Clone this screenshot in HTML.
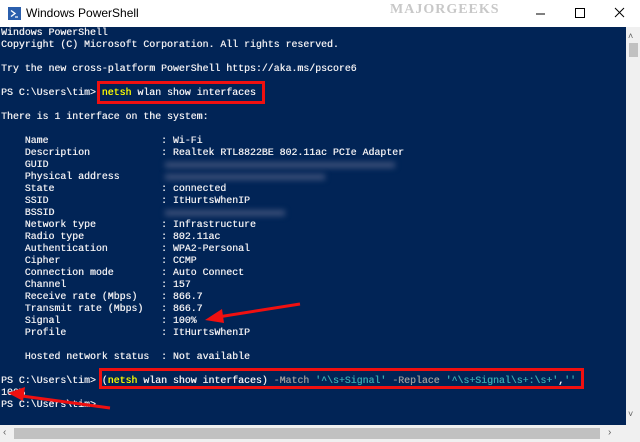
<!DOCTYPE html>
<html><head><meta charset="utf-8"><style>
*{margin:0;padding:0;box-sizing:border-box}
body{width:640px;height:442px;overflow:hidden;background:#fff;position:relative;font-family:"Liberation Sans",sans-serif}
#title{position:absolute;left:0;top:0;width:640px;height:27px;background:#fff}
#title .t{position:absolute;left:26px;top:6px;font-size:12px;color:#000}
#con{position:absolute;left:0;top:27px;width:626px;height:398px;background:#012456;overflow:hidden}
pre{position:absolute;left:1px;top:0px;font-family:"Liberation Mono",monospace;font-size:9.9px;line-height:12px;color:#eeedf0;white-space:pre;text-shadow:0.3px 0 0 currentColor}
.y{color:#ffff00}.g{color:#9a9a9a}.c{color:#35a8b0}
.blur{position:absolute;background:#3b4f78;filter:blur(3px);height:6px}
.box{position:absolute;border:3px solid #f01010}
#vs{position:absolute;left:626px;top:27px;width:14px;height:398px;background:#f0f0f0}
#hs{position:absolute;left:0;top:425px;width:640px;height:17px;background:#f0f0f0}
</style></head><body>
<div id="title">
<svg style="position:absolute;left:8px;top:7px" width="13" height="13" viewBox="0 0 13 13"><rect width="13" height="13" fill="#2b5fad"/><path d="M3 3.5l4 3-4 3" stroke="#fff" stroke-width="1.4" fill="none"/><path d="M7 10h3" stroke="#fff" stroke-width="1.2"/></svg>
<div class="t">Windows PowerShell</div>
<div style="position:absolute;left:390px;top:2px;font:bold 14px 'Liberation Serif',serif;color:#c8c8c8;letter-spacing:1px">MAJORGEEKS</div>
<svg style="position:absolute;left:0;top:0" width="640" height="27"><path d="M536 14h9" stroke="#000"/><rect x="575.5" y="8.5" width="9" height="9" fill="none" stroke="#000"/><path d="M615 8l9 9M624 8l-9 9" stroke="#000"/></svg>
</div>
<div id="con">
<pre>Windows PowerShell
Copyright (C) Microsoft Corporation. All rights reserved.

Try the new cross-platform PowerShell https://aka.ms/pscore6

PS C:\Users\tim> <span class="y">netsh</span> wlan show interfaces

There is 1 interface on the system:

    Name                   : Wi-Fi
    Description            : Realtek RTL8822BE 802.11ac PCIe Adapter
    GUID
    Physical address
    State                  : connected
    SSID                   : ItHurtsWhenIP
    BSSID
    Network type           : Infrastructure
    Radio type             : 802.11ac
    Authentication         : WPA2-Personal
    Cipher                 : CCMP
    Connection mode        : Auto Connect
    Channel                : 157
    Receive rate (Mbps)    : 866.7
    Transmit rate (Mbps)   : 866.7
    Signal                 : 100%
    Profile                : ItHurtsWhenIP

    Hosted network status  : Not available

PS C:\Users\tim> (<span class="y">netsh</span> wlan show interfaces) <span class="g">-Match</span> <span class="c">'^\s+Signal'</span> <span class="g">-Replace</span> <span class="c">'^\s+Signal\s+:\s+'</span>,<span class="c">''</span>
100%
PS C:\Users\tim> _</pre>
<div class="blur" style="left:165px;top:135px;width:230px"></div>
<div class="blur" style="left:165px;top:147px;width:160px"></div>
<div class="blur" style="left:165px;top:183px;width:120px"></div>
<div class="box" style="left:97px;top:54px;width:168px;height:23px"></div>
<div class="box" style="left:99px;top:341px;width:485px;height:21px"></div>
</div>
<svg style="position:absolute;left:0;top:0" width="640" height="442">
<path d="M300 304L218 317" stroke="#f01010" stroke-width="3"/><path d="M205 320L222 309L224 323Z" fill="#f01010"/>
<path d="M110 408L22 396" stroke="#f01010" stroke-width="3"/><path d="M8 393L25 387L23 401Z" fill="#f01010"/>
</svg>
<div id="vs"><div style="position:absolute;left:3px;top:16px;width:9px;height:14px;background:#c1c1c1"></div>
<div style="position:absolute;left:2px;top:4px;font-size:9px;color:#606060">˄</div>
<div style="position:absolute;left:2px;top:382px;font-size:9px;color:#606060">˅</div></div>
<div id="hs"><div style="position:absolute;left:14px;top:3px;width:586px;height:11px;background:#c1c1c1"></div>
<div style="position:absolute;left:3px;top:2px;font-size:10px;color:#606060">‹</div>
<div style="position:absolute;left:608px;top:2px;font-size:10px;color:#606060">›</div></div>
</body></html>
